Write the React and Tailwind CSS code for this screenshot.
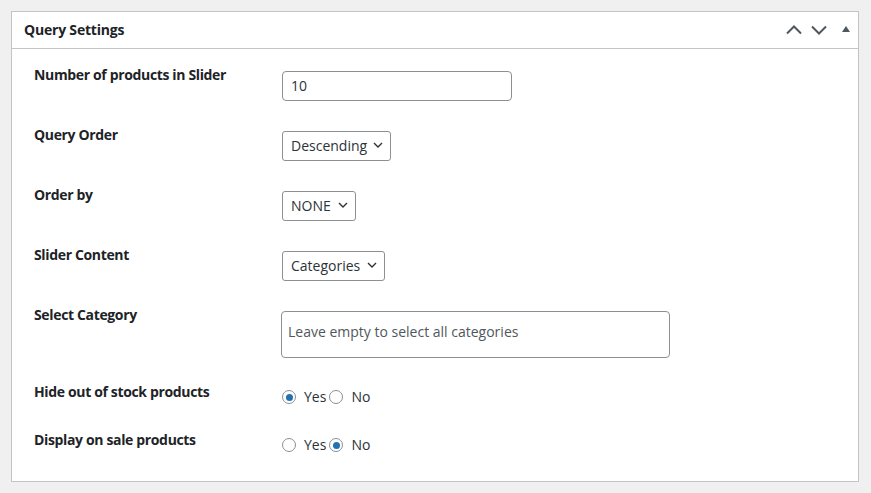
import { useState } from "react";

const FONT = "font-['Open_Sans','Noto_Sans',sans-serif]";

function Chevron({ up }) {
  return (
    <svg width="16" height="10" viewBox="0 0 16 10" className="text-[#50575e]">
      <path
        d={up ? "M1 8.5 L8 1.5 L15 8.5" : "M1 1.5 L8 8.5 L15 1.5"}
        fill="none"
        stroke="currentColor"
        strokeWidth="2"
      />
    </svg>
  );
}

function Select({ value, width }) {
  return (
    <div
      className={`flex h-[30px] items-center justify-between rounded-[3px] border border-[#8c8f94] bg-white pb-[2px] pl-[8px] pr-[7px] text-[14px] text-[#2c3338] ${width}`}
    >
      <span>{value}</span>
      <svg width="10" height="6" viewBox="0 0 10 6">
        <path d="M1 1 L5 5 L9 1" fill="none" stroke="#2c3338" strokeWidth="1.4" />
      </svg>
    </div>
  );
}

function Radio({ checked, label, onClick }) {
  return (
    <button onClick={onClick} className="flex items-center gap-[8px] text-[14px] leading-[20px] text-[#2c3338]">
      <span className="flex h-[14px] w-[14px] items-center justify-center rounded-full border border-[#8c8f94] bg-white">
        {checked && <span className="h-[7px] w-[7px] rounded-full bg-[#2271b1]" />}
      </span>
      <span>{label}</span>
    </button>
  );
}

function Row({ label, children, ctrlPad = "pt-[22px]", bottom = "pb-[8px]" }) {
  return (
    <div className={`flex items-start ${bottom}`}>
      <div className="w-[248px] shrink-0 pt-[17px] text-[14px] font-bold leading-[18px] tracking-[-0.35px] text-[#1d2327]">
        {label}
      </div>
      <div className={ctrlPad}>{children}</div>
    </div>
  );
}

export default function App() {
  const [count, setCount] = useState("10");
  const [hideStock, setHideStock] = useState(true);
  const [onSale, setOnSale] = useState(false);

  return (
    <div className={`min-h-screen bg-[#f0f0f1] pl-[11px] pr-[12px] pt-[11px] ${FONT}`}>
      <div className="h-[471px] border border-[#c3c4c7] bg-white">
        {/* header */}
        <div className="flex h-[37px] items-center justify-between border-b border-[#c3c4c7] pl-[12px] pr-[8px]">
          <h2 className="pb-[2px] text-[14px] font-bold tracking-[-0.2px] text-[#1d2327]">Query Settings</h2>
          <div className="flex items-center">
            <Chevron up />
            <span className="ml-[9px]"><Chevron /></span>
            <span className="ml-[15px] pb-[2px]">
              <svg width="8" height="6" viewBox="0 0 8 6" className="block">
                <path d="M0 6 L4 0 L8 6 Z" fill="#50575e" />
              </svg>
            </span>
          </div>
        </div>

        {/* body */}
        <div className="pl-[22px]">
          <Row label="Number of products in Slider">
            <input
              value={count}
              onChange={(e) => setCount(e.target.value)}
              className="h-[30px] w-[230px] rounded-[4px] border border-[#8c8f94] px-[8px] pb-[2px] text-[14px] text-[#2c3338] outline-none"
            />
          </Row>
          <Row label="Query Order">
            <Select value="Descending" width="w-[109px]" />
          </Row>
          <Row label="Order by">
            <Select value="NONE" width="w-[74px]" />
          </Row>
          <Row label="Slider Content">
            <Select value="Categories" width="w-[103px]" />
          </Row>
          <Row label="Select Category">
            <div className="-ml-[1px] h-[47px] w-[389px] rounded-[4px] border border-[#8c8f94] px-[6px] pt-[9px] text-[14px] text-[#50575e]">
              Leave empty to select all categories
            </div>
          </Row>
          <Row label="Hide out of stock products" ctrlPad="pt-[21px]" bottom="pb-[7px]">
            <div className="flex items-center gap-[3px]">
              <Radio checked={hideStock} label="Yes" onClick={() => setHideStock(true)} />
              <Radio checked={!hideStock} label="No" onClick={() => setHideStock(false)} />
            </div>
          </Row>
          <Row label="Display on sale products" ctrlPad="pt-[21px]" bottom="pb-[7px]">
            <div className="flex items-center gap-[3px]">
              <Radio checked={onSale} label="Yes" onClick={() => setOnSale(true)} />
              <Radio checked={!onSale} label="No" onClick={() => setOnSale(false)} />
            </div>
          </Row>
        </div>
      </div>
    </div>
  );
}
